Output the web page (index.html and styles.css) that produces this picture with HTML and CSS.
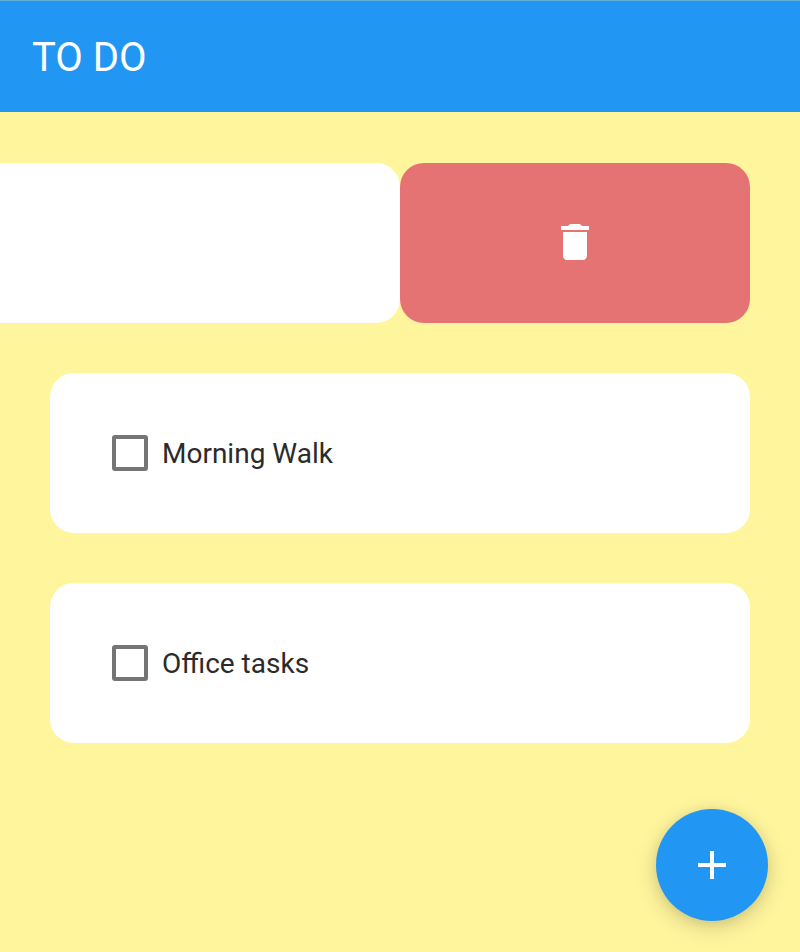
FILE: index.html
```html
<!DOCTYPE html>
<html lang="en">
<head>
<meta charset="utf-8">
<title>TO DO</title>
<link rel="stylesheet" href="styles.css">
</head>
<body>
<div class="app">
  <header class="appbar"><h1 class="title">TO DO</h1></header>
  <main class="list">
    <div class="row swiped">
      <div class="card card-slid"></div>
      <div class="delete">
        <svg class="icon trash" viewBox="0 0 24 24" aria-hidden="true"><path d="M6 19c0 1.1.9 2 2 2h8c1.1 0 2-.9 2-2V7H6v12zM19 4h-3.5l-1-1h-5l-1 1H5v2h14V4z"/></svg>
      </div>
    </div>
    <div class="row">
      <div class="card card-item">
        <span class="checkbox"></span>
        <span class="label">Morning Walk</span>
      </div>
    </div>
    <div class="row">
      <div class="card card-item">
        <span class="checkbox"></span>
        <span class="label">Office tasks</span>
      </div>
    </div>
  </main>
  <button class="fab" type="button" aria-label="Add">
    <svg class="icon" viewBox="0 0 24 24" aria-hidden="true"><path d="M19 13h-6v6h-2v-6H5v-2h6V5h2v6h6v2z"/></svg>
  </button>
</div>
</body>
</html>
```
FILE: styles.css
```css
* { box-sizing: border-box; }
html, body { margin: 0; height: 100%; }
body { font-family: Roboto, "Noto Sans", sans-serif; background: #fff59d; }
.app { position: relative; height: 952px; overflow: hidden; background: #fff59d; }
.appbar {
  height: 112px;
  background: #2196f3;
  border-top: 1px solid #5fb0d8;
  display: flex;
  align-items: center;
  padding-left: 32px;
}
.title { margin: 0; padding-top: 2px; font-size: 40px; font-weight: 400; color: #fff; line-height: 1; }
.list { display: flex; flex-direction: column; gap: 50px; padding: 51px 50px 0; }
.row { display: flex; height: 160px; }
.swiped { margin-left: -50px; }
.card { background: #fff; border-radius: 24px; flex: 1; }
.card-slid { border-radius: 0 24px 24px 0; }
.card-item { display: flex; align-items: center; padding-left: 62px; gap: 14px; }
.delete {
  width: 350px;
  background: #e57373;
  border-radius: 24px;
  display: flex;
  align-items: center;
  justify-content: center;
}
.icon { width: 48px; height: 48px; fill: #fff; display: block; }
.trash { margin-bottom: 2px; }
.checkbox { width: 36px; height: 36px; border: 4px solid #757575; border-radius: 3px; flex: none; }
.label { padding-top: 2px; font-size: 28px; color: #2b2b2b; line-height: 1; }
.fab {
  position: absolute;
  right: 32px;
  bottom: 31px;
  width: 112px;
  height: 112px;
  border: 0;
  padding: 0;
  border-radius: 50%;
  background: #2196f3;
  display: flex;
  align-items: center;
  justify-content: center;
  box-shadow: 0 6px 22px rgba(0,0,0,.16), 0 2px 12px rgba(0,0,0,.08);
}
```
